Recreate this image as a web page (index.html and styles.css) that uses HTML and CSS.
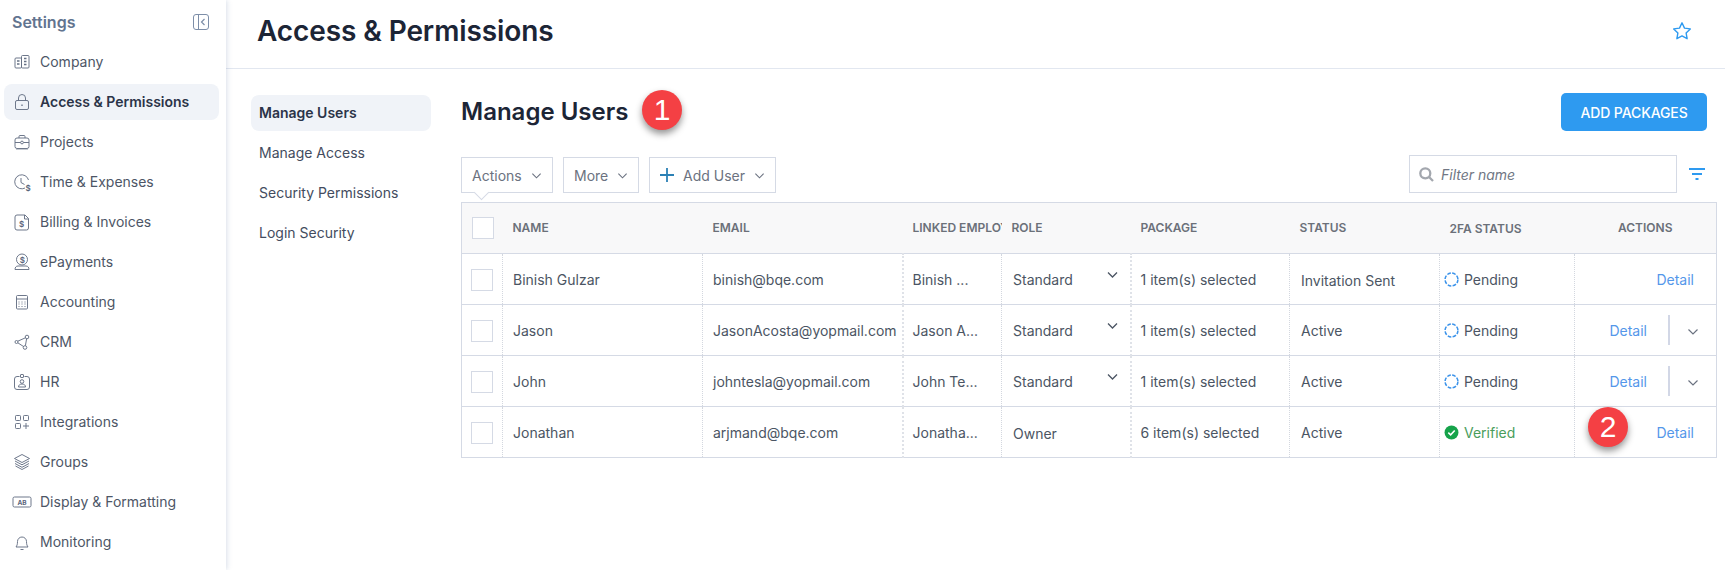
FILE: index.html
```html
<!DOCTYPE html>
<html lang="en">
<head>
<meta charset="utf-8">
<title>Access &amp; Permissions</title>
<link rel="stylesheet" href="styles.css">
</head>
<body>
<div class="app">
  <aside class="sidebar">
    <div class="side-head">
      <span class="side-title">Settings</span>
      <svg class="collapse" width="16" height="16" viewBox="0 0 16 16" fill="none" stroke="#7d8ea8" stroke-width="1"><rect x=".5" y=".5" width="15" height="15" rx="2.5"/><path d="M5.5 .5v15"/><path d="M11.5 5l-3 3 3 3" stroke-width="1.2"/></svg>
    </div>
    <nav class="side-nav">
      <a class="side-item"><svg class="ico" viewBox="0 0 20 20"><rect x="3" y="6" width="6.5" height="10" rx="1"/><rect x="9.5" y="3.5" width="7.5" height="12.500" rx="1"/><path d="M5 9h2.500M5 12h2.500M12 6.500h2.500M12 9.500h2.500M12 12.500h2.500" stroke-width="1.500"/></svg>Company</a>
      <a class="side-item active"><svg class="ico" viewBox="0 0 20 20"><rect x="3.500" y="8.500" width="13" height="9" rx="1.500"/><path d="M6.500 8.500V6a3.500 3.500 0 0 1 7 0v2.500"/><path d="M10 12.500v1.500" stroke-width="1.300"/></svg>Access &amp; Permissions</a>
      <a class="side-item"><svg class="ico" viewBox="0 0 20 20"><rect x="3" y="6" width="14" height="10.500" rx="2"/><path d="M7 6V4.500a1 1 0 0 1 1-1h4a1 1 0 0 1 1 1V6M3 10.500h5.500M11.500 10.500H17"/><circle cx="10" cy="10.500" r="1.400"/><path d="M4 17.500h12" stroke="#c3c8d0"/></svg>Projects</a>
      <a class="side-item"><svg class="ico" viewBox="0 0 20 20"><path d="M13 16a7 7 0 1 1 3.500-8"/><path d="M9 6v4.500l3.500 2"/><text class="ico-t" x="13.500" y="18.500">$</text></svg>Time &amp; Expenses</a>
      <a class="side-item"><svg class="ico" viewBox="0 0 20 20"><path d="M5 3h8l3.500 3.500V16a2 2 0 0 1-2 2H5a2 2 0 0 1-2-2V5a2 2 0 0 1 2-2z"/><path d="M12.500 3v4h4"/><text class="ico-t" x="7" y="15">$</text></svg>Billing &amp; Invoices</a>
      <a class="side-item"><svg class="ico" viewBox="0 0 20 20"><circle cx="10" cy="7.500" r="5.500"/><text class="ico-t" x="7.700" y="10.500">$</text><path d="M3 17.500c0-2 1-3.500 3-3.500h8c2 0 3 1.500 3 3.500z"/></svg>ePayments</a>
      <a class="side-item"><svg class="ico" viewBox="0 0 20 20"><rect x="4.500" y="3.500" width="11" height="13.500" rx="1"/><path d="M4.500 7h11"/><path d="M6.500 10h1M9.500 10h1M12.500 10h1M6.500 12h1M9.500 12h1M12.500 12h1M6.500 14.500h1M9.500 14.500h1M12.500 14.500h1"/></svg>Accounting</a>
      <a class="side-item"><svg class="ico" viewBox="0 0 20 20"><circle cx="4.500" cy="10" r="1.500"/><circle cx="15" cy="5" r="1.800"/><circle cx="13" cy="15.500" r="1.800"/><path d="M5.800 9.200l7.600-3.400M5.800 10.800l5.700 3.700M14.600 6.800l-1.200 6.900"/></svg>CRM</a>
      <a class="side-item"><svg class="ico" viewBox="0 0 20 20"><path d="M7.500 4.500H5a2.500 2.500 0 0 0-2.500 2.500v8A2.500 2.500 0 0 0 5 17.500h10a2.500 2.500 0 0 0 2.500-2.500V7A2.500 2.500 0 0 0 15 4.500h-2.500"/><rect x="8.500" y="2.500" width="3" height="3" rx=".5"/><circle cx="10" cy="9.500" r="1.800"/><path d="M6.500 15c0-2 1.500-3 3.500-3s3.500 1 3.500 3z"/></svg>HR</a>
      <a class="side-item"><svg class="ico" viewBox="0 0 20 20"><rect x="3.500" y="3.500" width="5" height="5" rx=".8"/><rect x="11.500" y="3.500" width="5" height="5" rx=".8"/><rect x="3.500" y="11.500" width="5" height="5" rx=".8"/><path d="M14 11v6M11 14h6"/></svg>Integrations</a>
      <a class="side-item"><svg class="ico" viewBox="0 0 20 20"><path d="M10 2.500l7.500 4-7.500 4-7.500-4z"/><path d="M3 9l7 3.800L17 9M3 11.500l7 3.800 7-3.800M3.500 14l6.500 3.500 6.500-3.500"/></svg>Groups</a>
      <a class="side-item"><svg class="ico ico-wide" viewBox="0 0 20 12"><rect x="1" y="1" width="18" height="10" rx="1.500"/><text class="ico-ab" x="10" y="8.500" text-anchor="middle">AB</text></svg>Display &amp; Formatting</a>
      <a class="side-item"><svg class="ico" viewBox="0 0 20 20"><path d="M4 15c1-1.500 1.500-2.500 1.500-5.500a4.500 4.500 0 0 1 9 0c0 3 .5 4 1.500 5.500z"/><path d="M8.500 17.500h3"/></svg>Monitoring</a>
    </nav>
  </aside>

  <main class="main">
    <header class="page-head">
      <h1 class="page-title">Access &amp; Permissions</h1>
      <svg class="star" width="20" height="20" viewBox="0 0 20 20" fill="none" stroke="#2e9af0" stroke-width="1.400" stroke-linejoin="round"><path d="M10 1.800l2.500 5.300 5.800.8-4.200 4 1 5.800-5.100-2.800-5.100 2.800 1-5.800-4.200-4 5.800-.8z"/></svg>
    </header>

    <div class="page-body">
      <nav class="sub-nav">
        <a class="sub-item active">Manage Users</a>
        <a class="sub-item">Manage Access</a>
        <a class="sub-item">Security Permissions</a>
        <a class="sub-item">Login Security</a>
      </nav>

      <section class="content">
        <div class="title-row">
          <h2 class="section-title">Manage Users</h2>
          <button class="primary">ADD PACKAGES</button>
        </div>
        <span class="badge badge-one">1</span>

        <div class="toolbar">
          <button class="tool tool-actions">Actions <svg class="chev" viewBox="0 0 12 8"><path d="M1.500 1.500L6 6l4.500-4.500"/></svg></button>
          <button class="tool tool-more">More <svg class="chev" viewBox="0 0 12 8"><path d="M1.500 1.500L6 6l4.500-4.500"/></svg></button>
          <button class="tool tool-add"><svg class="plus" width="14" height="14" viewBox="0 0 14 14"><path d="M7 0v14M0 7h14"/></svg>Add User <svg class="chev" viewBox="0 0 12 8"><path d="M1.500 1.500L6 6l4.500-4.500"/></svg></button>
          <div class="search">
            <svg width="15" height="15" viewBox="0 0 15 15" fill="none" stroke="#a3a7ae" stroke-width="2.300"><circle cx="6.300" cy="6.300" r="5"/><path d="M10 10l4 4"/></svg>
            <span class="search-text">Filter name</span>
          </div>
          <svg class="filter" width="16" height="12" viewBox="0 0 16 12" fill="none" stroke="#2e9af0" stroke-width="2"><path d="M0 1h16M3 6h10M6.500 11h3"/></svg>
        </div>

        <table class="users">
          <colgroup>
            <col class="c-check"><col class="c-name"><col class="c-email"><col class="c-linked"><col class="c-role"><col class="c-pack"><col class="c-status"><col class="c-two"><col class="c-act">
          </colgroup>
          <thead>
            <tr>
              <th class="check"><span class="box box-head"></span></th>
              <th>Name</th>
              <th>Email</th>
              <th class="clip">Linked Employee</th>
              <th>Role</th>
              <th>Package</th>
              <th>Status</th>
              <th class="low">2FA Status</th>
              <th class="center">Actions</th>
            </tr>
          </thead>
          <tbody>
            <tr>
              <td class="check"><span class="box"></span></td>
              <td>Binish Gulzar</td>
              <td>binish@bqe.com</td>
              <td class="dbl">Binish ...</td>
              <td class="shift"><div class="role">Standard<svg class="chev dark" viewBox="0 0 12 8"><path d="M1.500 1.500L6 6l4.500-4.500"/></svg></div></td>
              <td class="dbl">1 item(s) selected</td>
              <td class="low shift">Invitation Sent</td>
              <td><div class="state"><svg class="dot" viewBox="0 0 14 14"><circle class="dash" cx="7" cy="7" r="6"/></svg>Pending</div></td>
              <td class="acts"><div class="act"><a class="detail">Detail</a></div></td>
            </tr>
            <tr>
              <td class="check"><span class="box"></span></td>
              <td>Jason</td>
              <td>JasonAcosta@yopmail.com</td>
              <td class="dbl">Jason A...</td>
              <td class="shift"><div class="role">Standard<svg class="chev dark" viewBox="0 0 12 8"><path d="M1.500 1.500L6 6l4.500-4.500"/></svg></div></td>
              <td class="dbl">1 item(s) selected</td>
              <td class="shift">Active</td>
              <td><div class="state"><svg class="dot" viewBox="0 0 14 14"><circle class="dash" cx="7" cy="7" r="6"/></svg>Pending</div></td>
              <td class="acts"><div class="act split"><a class="detail">Detail</a><span class="sep"></span><svg class="chev more" viewBox="0 0 12 8"><path d="M1.500 1.500L6 6l4.500-4.500"/></svg></div></td>
            </tr>
            <tr>
              <td class="check"><span class="box"></span></td>
              <td>John</td>
              <td>johntesla@yopmail.com</td>
              <td class="dbl">John Te...</td>
              <td class="shift"><div class="role">Standard<svg class="chev dark" viewBox="0 0 12 8"><path d="M1.500 1.500L6 6l4.500-4.500"/></svg></div></td>
              <td class="dbl">1 item(s) selected</td>
              <td class="shift">Active</td>
              <td><div class="state"><svg class="dot" viewBox="0 0 14 14"><circle class="dash" cx="7" cy="7" r="6"/></svg>Pending</div></td>
              <td class="acts"><div class="act split"><a class="detail">Detail</a><span class="sep"></span><svg class="chev more" viewBox="0 0 12 8"><path d="M1.500 1.500L6 6l4.500-4.500"/></svg></div></td>
            </tr>
            <tr>
              <td class="check"><span class="box"></span></td>
              <td>Jonathan</td>
              <td>arjmand@bqe.com</td>
              <td class="dbl">Jonatha...</td>
              <td class="low shift">Owner</td>
              <td class="dbl">6 item(s) selected</td>
              <td class="shift">Active</td>
              <td><div class="state ok"><svg class="dot" viewBox="0 0 14 14"><circle cx="7" cy="7" r="6.500" fill="#16a34a"/><path d="M4 7.200l2.200 2L10 5.200" fill="none" stroke="#fff" stroke-width="1.500"/></svg>Verified</div></td>
              <td class="acts"><div class="act"><a class="detail">Detail</a></div></td>
            </tr>
          </tbody>
        </table>
        <span class="badge badge-two">2</span>
      </section>
    </div>
  </main>
</div>
</body>
</html>
```

FILE: styles.css
```css
* { box-sizing: border-box; }
html, body { margin: 0; height: 100%; }
body {
  font-family: Inter, "Noto Sans", sans-serif;
  font-size: 14px;
  color: #4b5563;
  background: #fff;
  overflow: hidden;
}
.app { display: flex; height: 570px; }

/* Sidebar */
.sidebar {
  width: 226px;
  flex: none;
  background: #fff;
  padding: 0 7px 0 4px;
  box-shadow: 1px 0 5px rgba(120, 140, 175, .28);
  position: relative;
}
.side-head {
  height: 44px;
  display: flex;
  align-items: center;
  justify-content: space-between;
  padding: 0 10px 0 8px;
}
.side-title { font-size: 16px; font-weight: 600; color: #62748f; }
.side-nav { display: flex; flex-direction: column; gap: 4px; }
.side-item {
  display: flex;
  align-items: center;
  height: 36px;
  border-radius: 8px;
  padding: 0 0 2px 8px;
  color: #4d5666;
}
.side-item.active { background: #f0f3f8; font-weight: 600; color: #2b3448; }
.ico {
  width: 20px;
  height: 20px;
  flex: none;
  margin: 2px 8px 0 0;
  fill: none;
  stroke: #667185;
  stroke-width: .95;
}
.ico-wide { width: 20px; height: 12px; }
.ico-t {
  font-size: 8px;
  font-weight: 600;
  fill: #59647a;
  stroke: none;
  font-family: Inter, sans-serif;
}
.ico-ab {
  font-size: 6.500px;
  font-weight: 700;
  fill: #59647a;
  stroke: none;
  font-family: Inter, sans-serif;
}

/* Main */
.main { flex: 1; min-width: 0; display: flex; flex-direction: column; }
.page-head {
  height: 69px;
  flex: none;
  display: flex;
  align-items: center;
  justify-content: space-between;
  padding: 0 33px 7px 31px;
  border-bottom: 1px solid #e2e7f0;
}
.page-title { margin: 0; font-size: 28px; font-weight: 600; color: #1c2536; letter-spacing: -.1px; }
.page-body { display: flex; align-items: flex-start; padding-left: 25px; }

.sub-nav {
  width: 180px;
  flex: none;
  margin-top: 26px;
  display: flex;
  flex-direction: column;
  gap: 4px;
}
.sub-item {
  height: 36px;
  display: flex;
  align-items: center;
  padding: 0 0 2px 8px;
  border-radius: 8px;
  color: #434c5e;
}
.sub-item.active { background: #f0f3f8; font-weight: 600; color: #2b3448; }

.content {
  position: relative;
  width: 1255px;
  margin-left: 30px;
  padding-top: 24px;
}
.title-row {
  height: 38px;
  display: flex;
  align-items: center;
  justify-content: space-between;
  padding-right: 9px;
}
.section-title { margin: 0 0 1px; font-size: 24px; font-weight: 600; color: #1c2536; }
.primary {
  width: 146px;
  height: 38px;
  border: 0;
  border-radius: 5px;
  background: #2e9af0;
  color: #fff;
  font: 500 14px Inter, sans-serif;
  letter-spacing: -.1px;
}

.badge {
  position: absolute;
  width: 40px;
  height: 40px;
  border-radius: 50%;
  background: #f44044;
  color: #fff;
  font: 30px/40px "Liberation Sans", Arial, sans-serif;
  text-align: center;
  box-shadow: 0 4px 7px rgba(0, 0, 0, .42);
}
.badge-one { left: 181px; top: 21px; }
.badge-two { left: 1127px; top: 338px; }

/* Toolbar */
.toolbar {
  margin-top: 24px;
  height: 38px;
  display: flex;
  align-items: center;
}
.tool {
  position: relative;
  height: 36px;
  margin-top: 2px;
  background: #fff;
  border: 1px solid #d5dae5;
  color: #6b7280;
  font: 14px Inter, sans-serif;
  display: flex;
  align-items: center;
  padding: 0;
}
.tool-actions { width: 92px; padding-left: 10px; margin-right: 10px; }
.tool-more { width: 76px; padding-left: 10px; margin-right: 10px; }
.tool-add { width: 127px; padding-left: 10px; margin-right: auto; }
.tool-actions::after {
  content: "";
  position: absolute;
  left: 14px;
  bottom: -6px;
  width: 10px;
  height: 10px;
  background: #fff;
  border-right: 1px solid #d5dae5;
  border-bottom: 1px solid #d5dae5;
  transform: rotate(45deg);
}
.tool .chev { margin: 2px 0 0 9px; }
.chev {
  width: 11px;
  height: 8px;
  margin-left: 8px;
  fill: none;
  stroke: #6b7280;
  stroke-width: 1.200;
}
.plus { margin-right: 9px; fill: none; stroke: #2c81b5; stroke-width: 1.800; }
.search {
  width: 268px;
  height: 38px;
  border: 1px solid #d5dae5;
  display: flex;
  align-items: center;
  padding-left: 9px;
  gap: 7px;
  margin-right: 12px;
}
.search-text { font-style: italic; color: #717784; }
.filter { margin-right: 11px; }

/* Table */
.users {
  margin-top: 9px;
  width: 1255px;
  table-layout: fixed;
  border-collapse: collapse;
  border: 1px solid #d5dae5;
}
.c-check { width: 41px; }
.c-name { width: 200px; }
.c-email { width: 200px; }
.c-linked { width: 99px; }
.c-role { width: 129px; }
.c-pack { width: 159px; }
.c-status { width: 150px; }
.c-two { width: 135px; }
.c-act { width: 142px; }
.users th {
  height: 51px;
  padding: 0 0 2px 10px;
  background: #f8f8f9;
  text-align: left;
  font-size: 12px;
  font-weight: 600;
  text-transform: uppercase;
  color: #6b7079;
  border-bottom: 1px solid #d5dae5;
  white-space: nowrap;
}
.users th.clip { overflow: hidden; }
.users th.center { text-align: center; padding: 0 0 2px; }
.users th.low { padding-bottom: 0; }
.users td.low { padding-top: 2px; }
.users td {
  height: 51px;
  padding: 0 0 0 10px;
  border: 1px solid #d5dae5;
  border-left: 1px dotted #d3d7df;
  border-right: 0;
  white-space: nowrap;
  overflow: hidden;
}
.users td.dbl { border-left: 2px dotted #dfe2e8; padding-left: 9px; }
.users td.shift { padding-left: 11px; }
.users td.check { padding: 0 0 0 9px; border-left: 0; }
.users th.check { padding: 0 0 0 9px; }
.box {
  display: block;
  width: 22px;
  height: 22px;
  border: 1px solid #d5dae5;
  background: #fff;
  margin-top: 2px;
}
.box-head { margin-top: 0; margin-left: 1px; }
.role {
  display: flex;
  align-items: center;
  justify-content: space-between;
  padding-right: 11px;
}
.chev.dark { width: 13px; stroke: #4b5563; margin: 0 0 8px; stroke-width: 1.300; }
.state { display: flex; align-items: center; gap: 5px; margin-left: -6px; }
.dot { width: 15px; height: 15px; flex: none; }
.dash { fill: none; stroke: #3b93ea; stroke-width: 1.400; stroke-dasharray: 3.400 1.300; }
.state.ok { color: #4a9d5b; }
.users td.acts { padding: 0; }
.act { display: flex; align-items: center; justify-content: flex-end; padding-right: 22px; }
.detail { color: #5497ea; }
.act.split { padding-right: 0; }
.sep { width: 2px; height: 30px; background: #d2d7e6; margin-left: 21px; }
.chev.more { width: 12px; margin: 3px 17px 0 17px; flex: none; }
```
